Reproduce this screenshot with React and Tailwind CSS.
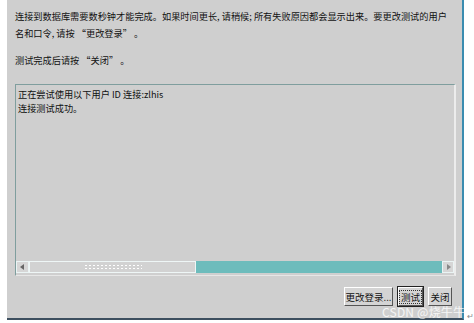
import React from 'react';

const font = { fontFamily: '"Noto Sans CJK SC", "Liberation Sans", sans-serif' };

function Btn({ children, focused }) {
  return (
    <div
      className={`h-[19px] flex items-center justify-center whitespace-nowrap bg-[#d4d4d4] border border-t-white border-l-white border-b-[#555] border-r-[#555] ${
        focused ? 'outline outline-1 outline-[#222]' : ''
      }`}
    >
      <span className={`px-[1px] leading-[12px] ${focused ? 'border border-dotted border-[#333]' : ''}`}>
        {children}
      </span>
    </div>
  );
}

export default function App() {
  return (
    <div className="relative w-[474px] h-[323px] bg-white overflow-hidden text-[9.2px] text-[#111]" style={font}>
      <div className="ml-[7px] w-[457px] h-[320px] bg-[#cfcfcf] border-r-2 border-r-[#3a8cb0] border-b-2 border-b-[#3d4f5f] flex flex-col">
        <div className="pl-[8px] pt-[8px] leading-[17px] whitespace-nowrap">
          <p>连接到数据库需要数秒钟才能完成。如果时间更长, 请稍候; 所有失败原因都会显示出来。要更改测试的用户</p>
          <p>名和口令, 请按 “更改登录” 。</p>
          <p className="mt-[10px]">测试完成后请按 “关闭” 。</p>
        </div>

        <div className="ml-[8px] mt-[15px] w-[441px] h-[192px] flex flex-col border-t border-l border-t-[#7f9e9e] border-l-[#7f9e9e] border-r-2 border-b border-r-[#ececec] border-b-[#e6e6e6]">
          <div className="flex-1 pl-[2px] pt-[2px] leading-[14px]">
            <p>正在尝试使用以下用户 ID 连接:zlhis</p>
            <p>连接测试成功。</p>
          </div>
          <div className="h-[12px] mb-[2px] flex bg-[#6dbcbc]">
            <div className="w-[13px] h-full bg-[#d6d6d6] border border-[#eaf4f4] flex items-center justify-center">
              <svg width="5" height="6" viewBox="0 0 5 6">
                <path d="M4 0 L0 3 L4 6 Z" fill="#666" />
              </svg>
            </div>
            <div className="w-[167px] h-full bg-[#d2d2d2] border border-[#eef6f6] flex items-center justify-center">
              <div className="w-[58px] h-[6px] bg-[radial-gradient(circle,#ffffff_0.8px,transparent_1px)] bg-[length:4px_3px]" />
            </div>
            <div className="flex-1" />
            <div className="w-[12px] h-full bg-[#d6d6d6] border border-[#eaf4f4] flex items-center justify-center">
              <svg width="5" height="6" viewBox="0 0 5 6">
                <path d="M1 0 L5 3 L1 6 Z" fill="#888" />
              </svg>
            </div>
          </div>
        </div>

        <div className="flex justify-end gap-[5px] pr-[10px] mt-[11px] text-[9.5px]">
          <div className="w-[49px]"><Btn>更改登录...</Btn></div>
          <div className="w-[25px]"><Btn focused>测试</Btn></div>
          <div className="w-[24px]"><Btn>关闭</Btn></div>
        </div>
      </div>

      <div className="absolute left-[382px] top-[305px] text-[12px] leading-[14px] text-white/80 tracking-[0.2px] whitespace-nowrap">
        CSDN @烧牛牛
      </div>
      <div className="absolute left-[467px] top-[311px] text-[8px] leading-[10px] text-[#888]">↵</div>
    </div>
  );
}
